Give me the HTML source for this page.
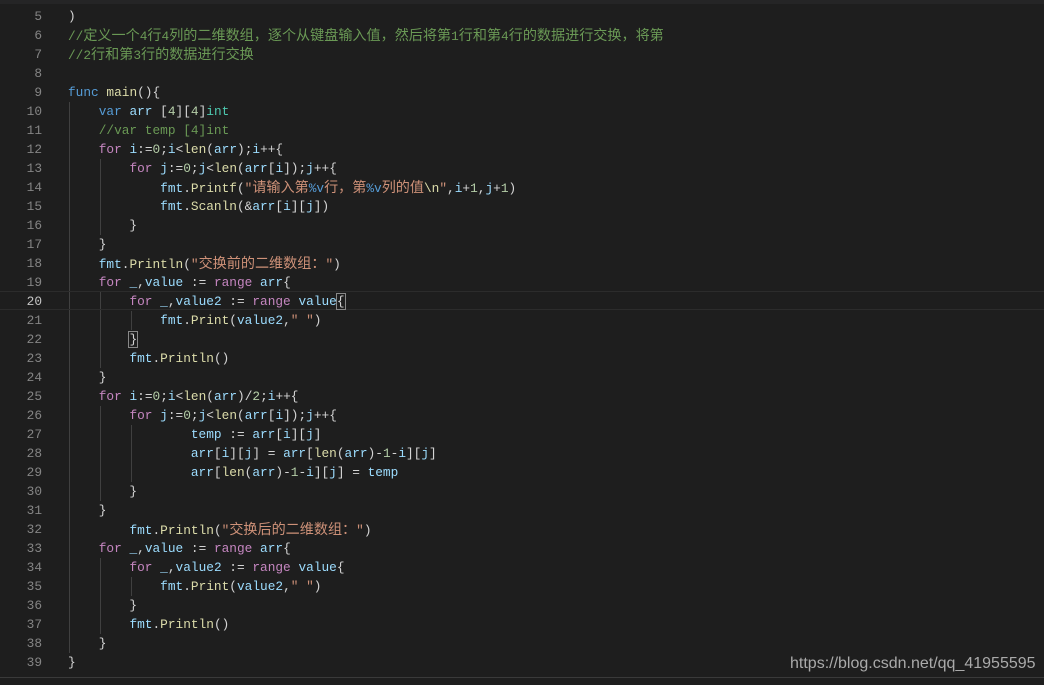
<!DOCTYPE html>
<html><head><meta charset="utf-8"><style>
body{margin:0;background:#1e1e1e;width:1044px;height:685px;overflow:hidden;position:relative;font-family:"Liberation Mono","Noto Sans CJK SC",monospace;font-size:12.8px;}
.top{position:absolute;left:0;top:0;width:1044px;height:4px;background:#252526}
.bot{position:absolute;left:0;top:677px;width:1044px;height:1px;background:#3a3a3a}
.l{position:absolute;left:0;height:19px;line-height:19px;white-space:pre;color:#d4d4d4;width:1044px}
.n{position:absolute;left:0;width:42px;text-align:right;color:#858585}
.c{position:absolute;left:68px}
.z{font-size:14.1px;font-family:"Noto Sans CJK SC",sans-serif;line-height:19px}
.cur{border-top:1px solid #2c2c2c;border-bottom:1px solid #2c2c2c;box-sizing:border-box}
.k{color:#569cd6}.p{color:#c586c0}.v{color:#9cdcfe}.f{color:#dcdcaa}.s{color:#ce9178}.g{color:#6a9955}.m{color:#b5cea8}.t{color:#4ec9b0}
.ig{position:absolute;width:1px;background:#404040}
.wm{position:absolute;left:790px;top:655px;font-family:"Liberation Sans",sans-serif;font-size:16px;color:#aaa}
.br{outline:1px solid #888;}
</style></head><body>
<div class="top"></div>
<div class="ig" style="left:69px;top:102px;height:551px"></div>
<div class="ig" style="left:100px;top:159px;height:76px"></div>
<div class="ig" style="left:100px;top:292px;height:76px"></div>
<div class="ig" style="left:131px;top:311px;height:19px"></div>
<div class="ig" style="left:100px;top:406px;height:95px"></div>
<div class="ig" style="left:131px;top:425px;height:57px"></div>
<div class="ig" style="left:100px;top:558px;height:76px"></div>
<div class="ig" style="left:131px;top:577px;height:19px"></div>
<div class="l" style="top:7px"><span class="n">5</span><span class="c">)</span></div>
<div class="l" style="top:26px"><span class="n">6</span><span class="c g">//<span class="z">定义一个</span>4<span class="z">行</span>4<span class="z">列的二维数组，逐个从键盘输入值，然后将第</span>1<span class="z">行和第</span>4<span class="z">行的数据进行交换，将第</span></span></div>
<div class="l" style="top:45px"><span class="n">7</span><span class="c g">//2<span class="z">行和第</span>3<span class="z">行的数据进行交换</span></span></div>
<div class="l" style="top:64px"><span class="n">8</span></div>
<div class="l" style="top:83px"><span class="n">9</span><span class="c"><span class="k">func</span> <span class="f">main</span>(){</span></div>
<div class="l" style="top:102px"><span class="n">10</span><span class="c">    <span class="k">var</span> <span class="v">arr</span> [<span class="m">4</span>][<span class="m">4</span>]<span class="t">int</span></span></div>
<div class="l" style="top:121px"><span class="n">11</span><span class="c">    <span class="g">//var temp [4]int</span></span></div>
<div class="l" style="top:140px"><span class="n">12</span><span class="c">    <span class="p">for</span> <span class="v">i</span>:=<span class="m">0</span>;<span class="v">i</span>&lt;<span class="f">len</span>(<span class="v">arr</span>);<span class="v">i</span>++{</span></div>
<div class="l" style="top:159px"><span class="n">13</span><span class="c">        <span class="p">for</span> <span class="v">j</span>:=<span class="m">0</span>;<span class="v">j</span>&lt;<span class="f">len</span>(<span class="v">arr</span>[<span class="v">i</span>]);<span class="v">j</span>++{</span></div>
<div class="l" style="top:178px"><span class="n">14</span><span class="c">            <span class="v">fmt</span>.<span class="f">Printf</span>(<span class="s">"<span class="z">请输入第</span></span><span class="k">%v</span><span class="s z">行，第</span><span class="k">%v</span><span class="s z">列的值</span><span class="f">\n</span><span class="s">"</span>,<span class="v">i</span>+<span class="m">1</span>,<span class="v">j</span>+<span class="m">1</span>)</span></div>
<div class="l" style="top:197px"><span class="n">15</span><span class="c">            <span class="v">fmt</span>.<span class="f">Scanln</span>(&amp;<span class="v">arr</span>[<span class="v">i</span>][<span class="v">j</span>])</span></div>
<div class="l" style="top:216px"><span class="n">16</span><span class="c">        }</span></div>
<div class="l" style="top:235px"><span class="n">17</span><span class="c">    }</span></div>
<div class="l" style="top:254px"><span class="n">18</span><span class="c">    <span class="v">fmt</span>.<span class="f">Println</span>(<span class="s">"<span class="z">交换前的二维数组：</span>"</span>)</span></div>
<div class="l" style="top:273px"><span class="n">19</span><span class="c">    <span class="p">for</span> <span class="v">_</span>,<span class="v">value</span> := <span class="p">range</span> <span class="v">arr</span>{</span></div>
<div class="l cur" style="top:291px"><span class="n" style="color:#c6c6c6">20</span><span class="c">        <span class="p">for</span> <span class="v">_</span>,<span class="v">value2</span> := <span class="p">range</span> <span class="v">value</span><span class="br">{</span></span></div>
<div class="l" style="top:311px"><span class="n">21</span><span class="c">            <span class="v">fmt</span>.<span class="f">Print</span>(<span class="v">value2</span>,<span class="s">" "</span>)</span></div>
<div class="l" style="top:330px"><span class="n">22</span><span class="c">        <span class="br">}</span></span></div>
<div class="l" style="top:349px"><span class="n">23</span><span class="c">        <span class="v">fmt</span>.<span class="f">Println</span>()</span></div>
<div class="l" style="top:368px"><span class="n">24</span><span class="c">    }</span></div>
<div class="l" style="top:387px"><span class="n">25</span><span class="c">    <span class="p">for</span> <span class="v">i</span>:=<span class="m">0</span>;<span class="v">i</span>&lt;<span class="f">len</span>(<span class="v">arr</span>)/<span class="m">2</span>;<span class="v">i</span>++{</span></div>
<div class="l" style="top:406px"><span class="n">26</span><span class="c">        <span class="p">for</span> <span class="v">j</span>:=<span class="m">0</span>;<span class="v">j</span>&lt;<span class="f">len</span>(<span class="v">arr</span>[<span class="v">i</span>]);<span class="v">j</span>++{</span></div>
<div class="l" style="top:425px"><span class="n">27</span><span class="c">                <span class="v">temp</span> := <span class="v">arr</span>[<span class="v">i</span>][<span class="v">j</span>]</span></div>
<div class="l" style="top:444px"><span class="n">28</span><span class="c">                <span class="v">arr</span>[<span class="v">i</span>][<span class="v">j</span>] = <span class="v">arr</span>[<span class="f">len</span>(<span class="v">arr</span>)-<span class="m">1</span>-<span class="v">i</span>][<span class="v">j</span>]</span></div>
<div class="l" style="top:463px"><span class="n">29</span><span class="c">                <span class="v">arr</span>[<span class="f">len</span>(<span class="v">arr</span>)-<span class="m">1</span>-<span class="v">i</span>][<span class="v">j</span>] = <span class="v">temp</span></span></div>
<div class="l" style="top:482px"><span class="n">30</span><span class="c">        }</span></div>
<div class="l" style="top:501px"><span class="n">31</span><span class="c">    }</span></div>
<div class="l" style="top:520px"><span class="n">32</span><span class="c">        <span class="v">fmt</span>.<span class="f">Println</span>(<span class="s">"<span class="z">交换后的二维数组：</span>"</span>)</span></div>
<div class="l" style="top:539px"><span class="n">33</span><span class="c">    <span class="p">for</span> <span class="v">_</span>,<span class="v">value</span> := <span class="p">range</span> <span class="v">arr</span>{</span></div>
<div class="l" style="top:558px"><span class="n">34</span><span class="c">        <span class="p">for</span> <span class="v">_</span>,<span class="v">value2</span> := <span class="p">range</span> <span class="v">value</span>{</span></div>
<div class="l" style="top:577px"><span class="n">35</span><span class="c">            <span class="v">fmt</span>.<span class="f">Print</span>(<span class="v">value2</span>,<span class="s">" "</span>)</span></div>
<div class="l" style="top:596px"><span class="n">36</span><span class="c">        }</span></div>
<div class="l" style="top:615px"><span class="n">37</span><span class="c">        <span class="v">fmt</span>.<span class="f">Println</span>()</span></div>
<div class="l" style="top:634px"><span class="n">38</span><span class="c">    }</span></div>
<div class="l" style="top:653px"><span class="n">39</span><span class="c">}</span></div>
<div class="wm">https://blog.csdn.net/qq_41955595</div>
<div class="bot"></div>
</body></html>
